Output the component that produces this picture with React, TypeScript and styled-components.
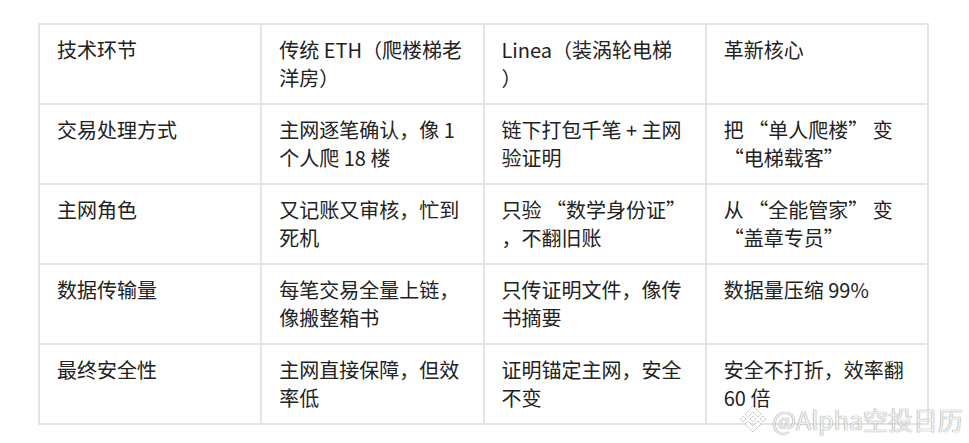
import React from "react";
import styled, { createGlobalStyle } from "styled-components";

const Global = createGlobalStyle`
  html, body { margin: 0; padding: 0; background: #ffffff; }
  body { font-family: "Noto Sans CJK SC", "Noto Sans", sans-serif; }
`;

const Page = styled.div`
  position: relative;
  width: 969px;
  height: 443px;
  padding: 23px 0 0 38px;
  box-sizing: border-box;
  overflow: hidden;
`;

const Table = styled.table`
  width: 891px;
  table-layout: fixed;
  border-collapse: collapse;
  border: 2px solid #e4e4e4;
`;

const Cell = styled.td`
  border: 2px solid #e4e4e4;
  padding: 11px 17px 11px 17px;
  vertical-align: top;
  font-size: 20px;
  line-height: 28px;
  height: 56px;
  color: #222222;
  line-break: anywhere;
  text-spacing-trim: space-all;
  font-family: "Noto Sans CJK SC", sans-serif;
`;

const Watermark = styled.div`
  position: absolute;
  right: 6px;
  top: 403px;
  display: flex;
  align-items: center;
  gap: 6px;
  font-family: "Noto Sans CJK SC", sans-serif;
  font-size: 25px;
  line-height: 32px;
  color: rgba(255, 255, 255, 0.92);
  text-shadow: 0 0 1px rgba(0, 0, 0, 0.45), 0 0 1px rgba(0, 0, 0, 0.3);
  pointer-events: none;
`;

const Logo = styled.svg`
  width: 26px;
  height: 26px;
  filter: drop-shadow(0 0 0.6px rgba(0, 0, 0, 0.45)) drop-shadow(0 0 0.6px rgba(0, 0, 0, 0.3));
`;

const rows: string[][] = [
  ["技术环节", "传统 ETH（爬楼梯老洋房）", "Linea（装涡轮电梯）", "革新核心"],
  ["交易处理方式", "主网逐笔确认，像 1 个人爬 18 楼", "链下打包千笔 + 主网验证明", "把 “单人爬楼” 变 “电梯载客”"],
  ["主网角色", "又记账又审核，忙到死机", "只验 “数学身份证”，不翻旧账", "从 “全能管家” 变 “盖章专员”"],
  ["数据传输量", "每笔交易全量上链，像搬整箱书", "只传证明文件，像传书摘要", "数据量压缩 99%"],
  ["最终安全性", "主网直接保障，但效率低", "证明锚定主网，安全不变", "安全不打折，效率翻 60 倍"],
];

export default function App() {
  return (
    <>
      <Global />
      <Page>
        <Table>
          <tbody>
            {rows.map((r, i) => (
              <tr key={i}>
                {r.map((c, j) => (
                  <Cell key={j}>{c}</Cell>
                ))}
              </tr>
            ))}
          </tbody>
        </Table>
        <Watermark>
          <Logo viewBox="0 0 24 24">
            <path
              fill="#ffffff"
              d="M16.624 13.9202l2.7175 2.7154-7.353 7.353-7.353-7.352 2.7175-2.7164 4.6355 4.6595 4.6356-4.6595zm4.6366-4.6366L24 12l-2.7154 2.7164L18.5682 12l2.6924-2.7164zm-9.272.001l2.7163 2.6914-2.7164 2.7174v-.001L9.2721 12l2.7164-2.7154zm-9.2722-.001L5.4088 12l-2.6914 2.6924L0 12l2.7164-2.7164zM11.9885.0115l7.353 7.329-2.7174 2.7154-4.6356-4.6356-4.6355 4.6595-2.7174-2.7154 7.353-7.353z"
            />
          </Logo>
          <span>@Alpha空投日历</span>
        </Watermark>
      </Page>
    </>
  );
}
